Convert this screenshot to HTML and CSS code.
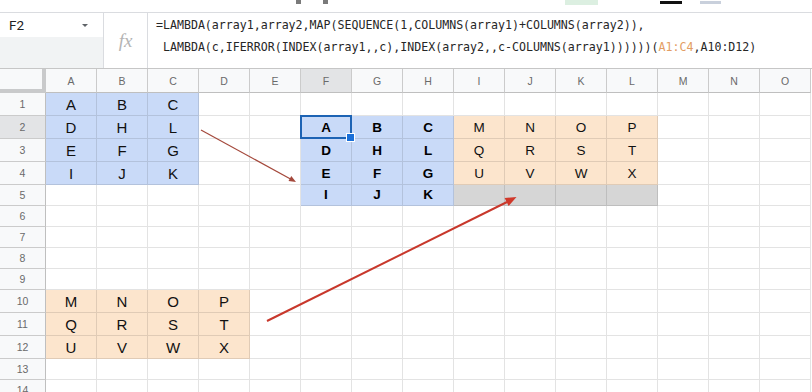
FILE: index.html
```html
<!DOCTYPE html>
<html>
<head>
<meta charset="utf-8">
<title>Sheet</title>
<link rel="stylesheet" href="styles.css">
</head>
<body>
<div class="app">
  <div class="topstrip">
    <span class="tb t1"></span><span class="tb t2"></span><span class="tb green"></span><span class="tb black"></span><span class="tb slate"></span>
  </div>
  <div class="fbar">
    <div class="namebox">
      <div class="nb-top"><span class="ref">F2</span><span class="caret"></span></div>
      <div class="nb-rest"></div>
    </div>
    <div class="fx">fx</div>
    <div class="formula"><div>=LAMBDA(array1,array2,MAP(SEQUENCE(1,COLUMNS(array1)+COLUMNS(array2)),</div><div> LAMBDA(c,IFERROR(INDEX(array1,,c),INDEX(array2,,c-COLUMNS(array1))))))(<span class="r1">A1:C4</span>,A10:D12)</div></div>
  </div>
  <div class="sheet">
    <div class="corner"></div><div class="h">A</div><div class="h">B</div><div class="h">C</div><div class="h">D</div><div class="h">E</div><div class="h hs">F</div><div class="h">G</div><div class="h">H</div><div class="h">I</div><div class="h">J</div><div class="h">K</div><div class="h">L</div><div class="h">M</div><div class="h">N</div><div class="h">O</div>

    <div class="rh">1</div><div class="c b L">A</div><div class="c b L">B</div><div class="c b L">C</div><div class="c"></div><div class="c"></div><div class="c"></div><div class="c"></div><div class="c"></div><div class="c"></div><div class="c"></div><div class="c"></div><div class="c"></div><div class="c"></div><div class="c"></div><div class="c"></div>

    <div class="rh rhs">2</div><div class="c b L">D</div><div class="c b L">H</div><div class="c b L">L</div><div class="c"></div><div class="c"></div><div class="c b s sel">A</div><div class="c b s">B</div><div class="c b s">C</div><div class="c o n">M</div><div class="c o n">N</div><div class="c o n">O</div><div class="c o n">P</div><div class="c"></div><div class="c"></div><div class="c"></div>

    <div class="rh">3</div><div class="c b L">E</div><div class="c b L">F</div><div class="c b L">G</div><div class="c"></div><div class="c"></div><div class="c b s">D</div><div class="c b s">H</div><div class="c b s">L</div><div class="c o n">Q</div><div class="c o n">R</div><div class="c o n">S</div><div class="c o n">T</div><div class="c"></div><div class="c"></div><div class="c"></div>

    <div class="rh">4</div><div class="c b L">I</div><div class="c b L">J</div><div class="c b L">K</div><div class="c"></div><div class="c"></div><div class="c b s">E</div><div class="c b s">F</div><div class="c b s">G</div><div class="c o n">U</div><div class="c o n">V</div><div class="c o n">W</div><div class="c o n">X</div><div class="c"></div><div class="c"></div><div class="c"></div>

    <div class="rh">5</div><div class="c"></div><div class="c"></div><div class="c"></div><div class="c"></div><div class="c"></div><div class="c b s">I</div><div class="c b s">J</div><div class="c b s">K</div><div class="c g"></div><div class="c g"></div><div class="c g"></div><div class="c g"></div><div class="c"></div><div class="c"></div><div class="c"></div>

    <div class="rh">6</div><div class="c"></div><div class="c"></div><div class="c"></div><div class="c"></div><div class="c"></div><div class="c"></div><div class="c"></div><div class="c"></div><div class="c"></div><div class="c"></div><div class="c"></div><div class="c"></div><div class="c"></div><div class="c"></div><div class="c"></div>

    <div class="rh">7</div><div class="c"></div><div class="c"></div><div class="c"></div><div class="c"></div><div class="c"></div><div class="c"></div><div class="c"></div><div class="c"></div><div class="c"></div><div class="c"></div><div class="c"></div><div class="c"></div><div class="c"></div><div class="c"></div><div class="c"></div>

    <div class="rh">8</div><div class="c"></div><div class="c"></div><div class="c"></div><div class="c"></div><div class="c"></div><div class="c"></div><div class="c"></div><div class="c"></div><div class="c"></div><div class="c"></div><div class="c"></div><div class="c"></div><div class="c"></div><div class="c"></div><div class="c"></div>

    <div class="rh">9</div><div class="c"></div><div class="c"></div><div class="c"></div><div class="c"></div><div class="c"></div><div class="c"></div><div class="c"></div><div class="c"></div><div class="c"></div><div class="c"></div><div class="c"></div><div class="c"></div><div class="c"></div><div class="c"></div><div class="c"></div>

    <div class="rh">10</div><div class="c o L">M</div><div class="c o L">N</div><div class="c o L">O</div><div class="c o L">P</div><div class="c"></div><div class="c"></div><div class="c"></div><div class="c"></div><div class="c"></div><div class="c"></div><div class="c"></div><div class="c"></div><div class="c"></div><div class="c"></div><div class="c"></div>

    <div class="rh">11</div><div class="c o L">Q</div><div class="c o L">R</div><div class="c o L">S</div><div class="c o L">T</div><div class="c"></div><div class="c"></div><div class="c"></div><div class="c"></div><div class="c"></div><div class="c"></div><div class="c"></div><div class="c"></div><div class="c"></div><div class="c"></div><div class="c"></div>

    <div class="rh">12</div><div class="c o L">U</div><div class="c o L">V</div><div class="c o L">W</div><div class="c o L">X</div><div class="c"></div><div class="c"></div><div class="c"></div><div class="c"></div><div class="c"></div><div class="c"></div><div class="c"></div><div class="c"></div><div class="c"></div><div class="c"></div><div class="c"></div>

    <div class="rh">13</div><div class="c"></div><div class="c"></div><div class="c"></div><div class="c"></div><div class="c"></div><div class="c"></div><div class="c"></div><div class="c"></div><div class="c"></div><div class="c"></div><div class="c"></div><div class="c"></div><div class="c"></div><div class="c"></div><div class="c"></div>

    <div class="rh">14</div><div class="c"></div><div class="c"></div><div class="c"></div><div class="c"></div><div class="c"></div><div class="c"></div><div class="c"></div><div class="c"></div><div class="c"></div><div class="c"></div><div class="c"></div><div class="c"></div><div class="c"></div><div class="c"></div><div class="c"></div>
  </div>
  <svg class="arrows" width="812" height="392" viewBox="0 0 812 392">
    <line x1="201" y1="130" x2="290.5" y2="179" stroke="#a4483b" stroke-width="1.2"/>
    <polygon points="296,182 288.5,181 291.3,175.9" fill="#a4483b"/>
    <line x1="267" y1="321" x2="507" y2="202" stroke="#c8382c" stroke-width="2"/>
    <polygon points="516.5,197 508.6,206 504.6,197.9" fill="#d0382a"/>
  </svg>
</div>
</body>
</html>
```
FILE: styles.css
```css
* { box-sizing: border-box; margin: 0; padding: 0; }
html, body { width: 812px; height: 392px; overflow: hidden; background: #fff; }
body { font-family: "Liberation Sans", Arial, sans-serif; }

.app { position: relative; width: 812px; height: 392px; overflow: hidden; }

/* top toolbar remnant */
.topstrip { height: 13px; border-bottom: 1px solid #dadce0; display: flex; align-items: flex-start; }
.tb { display: block; flex: none; }
.t1 { margin-left: 296px; width: 5px; height: 4px; background: #7a7a7a; }
.t2 { margin-left: 22px; width: 5px; height: 4px; background: #7a7a7a; }
.green { margin-left: 237px; width: 33px; height: 5px; background: #dcefe1; }
.black { margin-left: 62px; margin-top: 1px; width: 22px; height: 3px; background: #111; }
.slate { margin-left: 18px; margin-top: 1px; width: 21px; height: 3px; background: #c9d0dc; }

/* formula bar */
.fbar { height: 56px; border-bottom: 1px solid #c6c6c6; display: flex; }
.namebox { width: 104px; border-right: 1px solid #dadce0; display: flex; flex-direction: column; }
.nb-top { height: 24px; display: flex; align-items: center; justify-content: space-between; padding: 0 15px 0 9px; background: #fff; }
.ref { font-family: Roboto, "Liberation Sans", sans-serif; font-size: 13.5px; color: #202124; }
.caret { width: 0; height: 0; border-left: 3.5px solid transparent; border-right: 3.5px solid transparent; border-top: 3.5px solid #5f6368; }
.nb-rest { flex: 1; background: #f1f3f4; }
.fx { width: 44px; border-right: 1px solid #dadce0; display: flex; align-items: center; justify-content: center; font-family: "Liberation Serif", serif; font-style: italic; font-size: 19px; color: #b4b4b4; }
.formula { flex: 1; padding: 1px 0 0 8px; font-family: "DejaVu Sans Mono", monospace; font-size: 11.6px; line-height: 22px; color: #262626; white-space: pre; }
.r1 { color: #e39d63; }

/* grid */
.sheet {
  display: grid;
  grid-template-columns: 46px repeat(15, 51px);
  grid-template-rows: 24px repeat(4, 23px) repeat(5, 21px) repeat(3, 23px) repeat(2, 21px);
}
.corner { background: #f8f9fa; border-right: 4px solid #c9cacb; border-bottom: 4px solid #c9cacb; }
.h { background: #f8f9fa; border-right: 1px solid #cbcbcb; border-bottom: 1px solid #bfbfbf; display: flex; align-items: center; justify-content: center; font-size: 10.5px; color: #6a6a6a; }
.hs { background: #e3e4e6; }
.rh { background: #f8f9fa; border-right: 1px solid #bfbfbf; border-bottom: 1px solid #cbcbcb; display: flex; align-items: center; justify-content: center; font-size: 10.5px; color: #6a6a6a; }
.rhs { background: #e3e4e6; }

.c { border-right: 1px solid rgba(0, 0, 0, 0.11); border-bottom: 1px solid rgba(0, 0, 0, 0.11); display: flex; justify-content: center; align-items: flex-end; color: #111; }
.b { background: #c9daf8; }
.o { background: #fce5cd; }
.g { background: #d6d6d6; }
.L { font-size: 15px; line-height: 17px; padding-bottom: 2px; }
.s { font-size: 13.5px; line-height: 16px; font-weight: bold; padding-bottom: 2px; color: #000; }
.n { font-size: 13.5px; line-height: 16px; padding-bottom: 2px; }

.sel { position: relative; z-index: 2; }
.sel::before { content: ""; position: absolute; left: -1px; top: -1px; right: -1px; bottom: -1px; border: 2px solid #1d63b4; }
.sel::after { content: ""; position: absolute; right: -4px; bottom: -4px; width: 7px; height: 7px; background: #1a6fd8; border: 1px solid #fff; }

.arrows { position: absolute; left: 0; top: 0; pointer-events: none; z-index: 5; }
```
